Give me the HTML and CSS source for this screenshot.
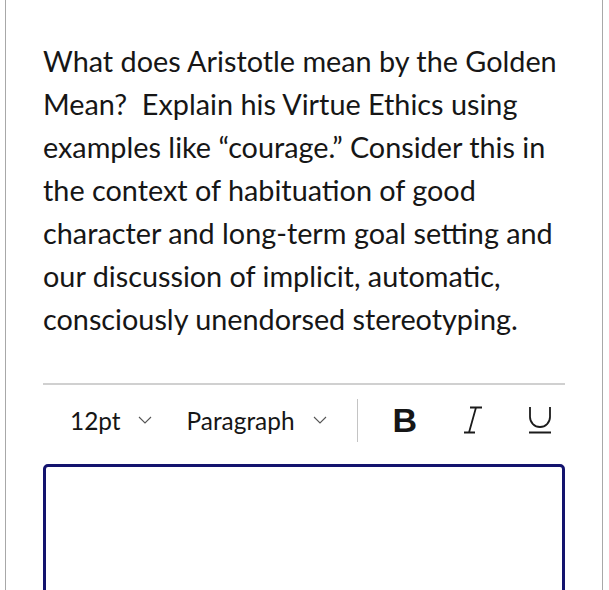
FILE: index.html
```html
<!DOCTYPE html>
<html>
<head>
<meta charset="utf-8">
<link rel="stylesheet" href="styles.css">
</head>
<body>
<div class="panel">
  <p class="question">What does Aristotle mean by the Golden Mean?&nbsp; Explain his Virtue Ethics using examples like “courage.” Consider this in the context of habituation of good character and long-term goal setting and our discussion of implicit, automatic, consciously unendorsed stereotyping.</p>
  <div class="divider"></div>
  <div class="toolbar">
    <span class="size">12pt</span>
    <svg class="chev chev-size" width="14" height="8" viewBox="0 0 14 8"><path d="M1 1 L7 7 L13 1" fill="none" stroke="#555" stroke-width="1.1"/></svg>
    <span class="block">Paragraph</span>
    <svg class="chev chev-block" width="14" height="8" viewBox="0 0 14 8"><path d="M1 1 L7 7 L13 1" fill="none" stroke="#555" stroke-width="1.1"/></svg>
    <span class="sep"></span>
    <span class="bold">B</span>
    <svg class="ital" width="20" height="28" viewBox="0 0 20 28"><path d="M7 1.5 H19 M13 1.5 L6 26.5 M1 26.5 H12" fill="none" stroke="#1b1b1b" stroke-width="1.8"/></svg>
    <svg class="under" width="24" height="28" viewBox="0 0 24 28"><path d="M2 1 V11 A10 10 0 0 0 22 11 V1" fill="none" stroke="#1b1b1b" stroke-width="1.8"/><path d="M1 26.5 H23" stroke="#1b1b1b" stroke-width="2"/></svg>
  </div>
  <div class="editor"></div>
</div>
</body>
</html>
```

FILE: styles.css
```css
html, body {
  margin: 0;
  padding: 0;
  background: #fff;
}
body {
  height: 590px;
  overflow: hidden;
}
.panel {
  margin-left: 5px;
  width: 598px;
  height: 590px;
  border-left: 1px solid #a8a8a8;
  border-right: 1px solid #a8a8a8;
  padding: 40px 37px 0 37px;
  box-sizing: border-box;
  font-family: Lato, "Open Sans", sans-serif;
  color: #161616;
  overflow: hidden;
}
.question {
  margin: 0;
  font-size: 28.8px;
  line-height: 43px;
}
.divider {
  margin-top: 42px;
  height: 2px;
  background: #d0d0d0;
}
.toolbar {
  display: flex;
  align-items: center;
  height: 70px;
  padding-left: 27px;
}
.size, .block {
  font-size: 24.4px;
}
.chev-size { margin-left: 17px; }
.block { margin-left: 35px; }
.chev-block { margin-left: 18px; }
.sep {
  margin-left: 30px;
  width: 1px;
  height: 43px;
  background: #c4c4c4;
}
.bold {
  margin-left: 35px;
  font-family: "Liberation Sans", Arial, sans-serif;
  font-weight: bold;
  font-size: 34px;
  line-height: 1;
}
.ital { margin-left: 46px; }
.under { margin-left: 45px; }
.editor {
  margin-top: 9px;
  height: 200px;
  border: 3px solid #13136e;
  border-radius: 5px;
}
```
